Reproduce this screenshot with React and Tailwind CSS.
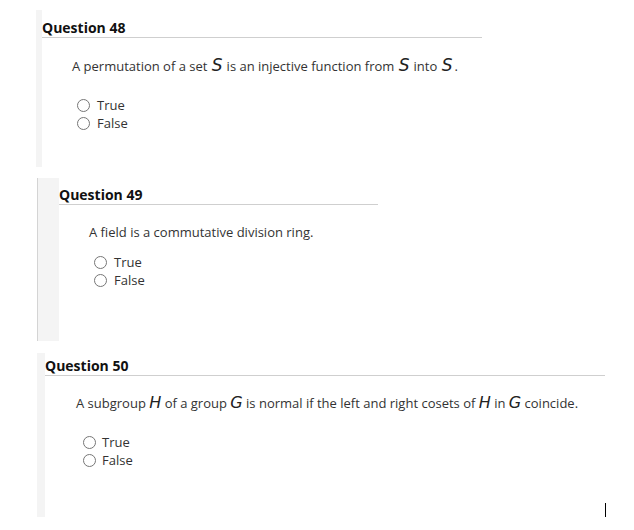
import React from 'react';

const mathCls = "font-['DejaVu_Sans'] italic text-[16px] leading-[18px] text-[#222]";

const App = () => {
  return (
    <div className="w-[634px] h-[530px] bg-white overflow-hidden font-['Open_Sans'] text-[13px] text-[#333] relative">
      {/* Question 48 */}
      <div className="ml-[36px] mt-[10px] h-[157px] flex">
        <div className="w-[6px] bg-[#f4f4f4]" />
        <div className="w-[440px]">
          <div className="pt-[9px] border-b border-[#cfcfcf] font-bold text-[14px] leading-[18px] text-[#111]">
            Question 48
          </div>
          <div className="pl-[30px] mt-[18px] leading-[18px]">
            A permutation of a set <span className={`${mathCls} text-[17px] ml-[1px] mr-[4px]`}>S</span>is an injective function from <span className={`${mathCls} text-[17px] ml-[1px] mr-[4px]`}>S</span>into <span className={`${mathCls} text-[17px] ml-[1px] mr-[2px]`}>S</span>.
          </div>
          <div className="pl-[35px] mt-[21px] leading-[18px]">
            <label className="flex items-center h-[18px]">
              <input type="radio" name="q48" className="m-0 w-[13px] h-[13px]" />
              <span className="ml-[7px]">True</span>
            </label>
            <label className="flex items-center h-[18px]">
              <input type="radio" name="q48" className="m-0 w-[13px] h-[13px]" />
              <span className="ml-[7px]">False</span>
            </label>
          </div>
        </div>
      </div>

      {/* Question 49 */}
      <div className="ml-[37px] mt-[11px] h-[163px] flex">
        <div className="w-px bg-[#d4d4d4]" />
        <div className="w-[21px] bg-[#f4f4f4]" />
        <div className="w-[319px]">
          <div className="pt-[8px] border-b border-[#cfcfcf] font-bold text-[14px] leading-[18px] text-[#111]">
            Question 49
          </div>
          <div className="pl-[30px] mt-[18px] leading-[18px]">
            A field is a commutative division ring.
          </div>
          <div className="pl-[35px] mt-[12px] leading-[18px]">
            <label className="flex items-center h-[18px]">
              <input type="radio" name="q49" className="m-0 w-[13px] h-[13px]" />
              <span className="ml-[7px]">True</span>
            </label>
            <label className="flex items-center h-[18px]">
              <input type="radio" name="q49" className="m-0 w-[13px] h-[13px]" />
              <span className="ml-[7px]">False</span>
            </label>
          </div>
        </div>
      </div>

      {/* Question 50 */}
      <div className="ml-[37px] mt-[12px] h-[164px] flex">
        <div className="w-[8px] bg-[#f4f4f4]" />
        <div className="w-[560px]">
          <div className="pt-[4px] border-b border-[#cfcfcf] font-bold text-[14px] leading-[18px] text-[#111]">
            Question 50
          </div>
          <div className="pl-[31px] mt-[18px] leading-[18px]">
            A subgroup <span className={mathCls}>H</span> of a group <span className={mathCls}>G</span> is normal if the left and right cosets of <span className={mathCls}>H</span> in <span className={mathCls}>G</span> coincide.
          </div>
          <div className="pl-[38px] mt-[21px] leading-[18px]">
            <label className="flex items-center h-[18px]">
              <input type="radio" name="q50" className="m-0 w-[13px] h-[13px]" />
              <span className="ml-[6px]">True</span>
            </label>
            <label className="flex items-center h-[18px]">
              <input type="radio" name="q50" className="m-0 w-[13px] h-[13px]" />
              <span className="ml-[6px]">False</span>
            </label>
          </div>
        </div>
      </div>

      {/* text cursor */}
      <div className="absolute left-[605px] top-[503px] w-px h-[14px] bg-black" />
    </div>
  );
};

export default App;
